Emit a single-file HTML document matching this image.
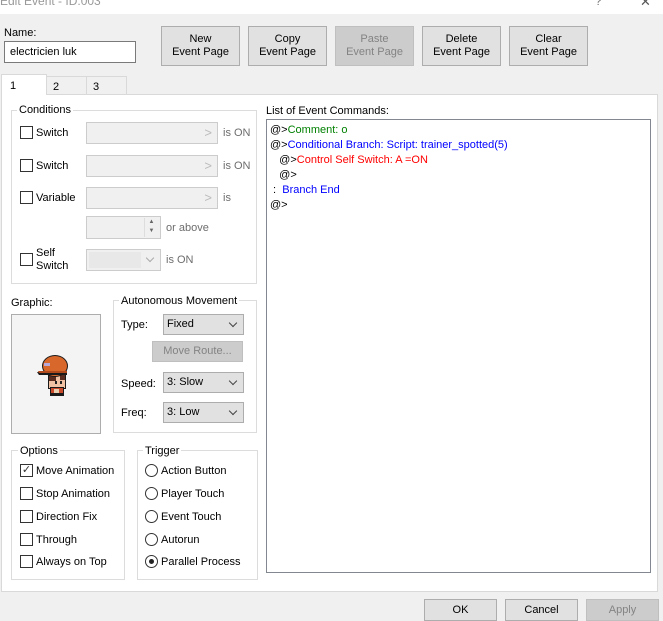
<!DOCTYPE html>
<html><head><style>
*{box-sizing:border-box;margin:0;padding:0}
body{width:663px;height:621px;background:#f0f0f0;font-family:"Liberation Sans",sans-serif;font-size:11px;color:#000;position:relative;overflow:hidden}
.a{position:absolute}
.btn{position:absolute;background:#e1e1e1;border:1px solid #adadad;text-align:center;line-height:13px;display:flex;align-items:center;justify-content:center}
.dis{background:#cccccc;border-color:#bfbfbf;color:#838383}
.grp{position:absolute;border:1px solid #dcdcdc}
.gl{position:absolute;background:#fff;padding:0 2px}
.cb{position:absolute;width:13px;height:13px;border:1px solid #333;background:#fff}
.rb{position:absolute;width:13px;height:13px;border:1px solid #333;border-radius:50%;background:#fff}
.fld{position:absolute;background:#f0f0f0;border:1px solid #cccccc}
.gr{color:#6d6d6d}
.cmb{position:absolute;background:#e1e1e1;border:1px solid #adadad;padding-left:3px;line-height:19px}
.chev{position:absolute;right:7px;top:5px;width:6px;height:6px;border-right:1px solid #444;border-bottom:1px solid #444;transform:rotate(45deg)}
.list div{height:15px;line-height:15px;white-space:pre}
.t{position:absolute;margin-top:1px}
</style></head><body>
<div class="a" style="left:0;top:0;width:663px;height:14px;background:#fff"></div>
<div class="a gr" style="left:0;top:-6px;font-size:12px;color:#999">Edit Event - ID:003</div>
<div class="a" style="left:595px;top:-6px;font-size:12px;color:#777">?</div>
<div class="a" style="left:640px;top:-6px;font-size:13px;color:#555">✕</div>

<div class="a" style="left:4px;top:27px">Name:</div>
<div class="a" style="left:4px;top:41px;width:132px;height:22px;border:1px solid #7a7a7a;background:#fff;padding:4px 0 0 5px">electricien luk</div>
<div class="btn" style="left:161px;top:26px;width:79px;height:40px">New<br>Event Page</div>
<div class="btn" style="left:248px;top:26px;width:79px;height:40px">Copy<br>Event Page</div>
<div class="btn dis" style="left:335px;top:26px;width:79px;height:40px">Paste<br>Event Page</div>
<div class="btn" style="left:422px;top:26px;width:79px;height:40px">Delete<br>Event Page</div>
<div class="btn" style="left:509px;top:26px;width:79px;height:40px">Clear<br>Event Page</div>

<div class="a" style="left:1px;top:94px;width:657px;height:498px;background:#fff;border:1px solid #d9d9d9"></div>
<div class="a" style="left:46px;top:76px;width:41px;height:19px;background:#f0f0f0;border:1px solid #d9d9d9;padding:4px 0 0 6px">2</div>
<div class="a" style="left:86px;top:76px;width:41px;height:19px;background:#f0f0f0;border:1px solid #d9d9d9;padding:4px 0 0 6px">3</div>
<div class="a" style="left:1px;top:74px;width:46px;height:21px;background:#fff;border:1px solid #d9d9d9;border-bottom:none;padding:5px 0 0 8px">1</div>

<div class="grp" style="left:11px;top:110px;width:246px;height:174px"></div>
<div class="gl" style="left:17px;top:104px">Conditions</div>
<div class="cb" style="left:20px;top:126px"></div><div class="t" style="left:36px;top:126px">Switch</div>
<div class="fld" style="left:86px;top:122px;width:132px;height:22px"><span class="a" style="right:5px;top:2px;color:#bbb;font-size:13px">&gt;</span></div><div class="t gr" style="left:223px;top:126px">is ON</div>
<div class="cb" style="left:20px;top:159px"></div><div class="t" style="left:36px;top:159px">Switch</div>
<div class="fld" style="left:86px;top:155px;width:132px;height:22px"><span class="a" style="right:5px;top:2px;color:#bbb;font-size:13px">&gt;</span></div><div class="t gr" style="left:223px;top:159px">is ON</div>
<div class="cb" style="left:20px;top:191px"></div><div class="t" style="left:36px;top:191px">Variable</div>
<div class="fld" style="left:86px;top:187px;width:132px;height:22px"><span class="a" style="right:5px;top:2px;color:#bbb;font-size:13px">&gt;</span></div><div class="t gr" style="left:223px;top:191px">is</div>
<div class="fld" style="left:86px;top:216px;width:75px;height:23px"></div>
<div class="a" style="left:144px;top:218px;width:14px;height:19px;border-left:1px solid #ddd;color:#666;font-size:6px;text-align:center;line-height:9px">▲<br>▼</div>
<div class="t gr" style="left:166px;top:221px">or above</div>
<div class="cb" style="left:20px;top:253px"></div><div class="t" style="left:36px;top:246px;line-height:13px">Self<br>Switch</div>
<div class="fld" style="left:86px;top:249px;width:75px;height:22px"><div class="a" style="left:2px;top:2px;width:52px;height:16px;background:#e8e8e8"></div><div class="chev" style="border-color:#aaa"></div></div>
<div class="t gr" style="left:166px;top:253px">is ON</div>

<div class="a" style="left:11px;top:297px">Graphic:</div>
<div class="a" style="left:11px;top:314px;width:90px;height:120px;background:#f4f4f4;border:1px solid #adadad"></div>
<svg class="a" style="left:30px;top:350px" width="45" height="55" viewBox="0 0 45 55">
<rect x="18" y="24" width="18" height="15" fill="#1a1a1a"/>
<rect x="19" y="25" width="16" height="13" fill="#f2c2a4"/>
<rect x="19" y="25" width="7" height="6" fill="#5a2c20"/>
<rect x="30" y="25" width="5" height="5" fill="#5a2c20"/>
<rect x="25" y="31" width="2" height="3" fill="#222"/><rect x="30" y="31" width="2" height="3" fill="#222"/>
<rect x="20" y="37" width="14" height="9" fill="#1a1a1a"/>
<rect x="21" y="38" width="12" height="5" fill="#c84a2a"/>
<rect x="24" y="39" width="5" height="4" fill="#e8d0b0"/>
<ellipse cx="25" cy="16" rx="13" ry="11" fill="#1a1a1a"/>
<ellipse cx="25" cy="16" rx="12" ry="10" fill="#d8672c"/>
<path d="M7 22h30v3H9z" fill="#1a1a1a"/>
<path d="M8 21h29v2H9z" fill="#b04a1c"/>
<rect x="14" y="13" width="6" height="3" fill="#b8a8d8"/>
</svg>

<div class="grp" style="left:113px;top:300px;width:144px;height:133px"></div>
<div class="gl" style="left:119px;top:295px">Autonomous Movement</div>
<div class="t" style="left:121px;top:318px">Type:</div>
<div class="cmb" style="left:163px;top:314px;width:81px;height:21px">Fixed<div class="chev"></div></div>
<div class="btn dis" style="left:152px;top:341px;width:91px;height:21px">Move Route...</div>
<div class="t" style="left:121px;top:377px">Speed:</div>
<div class="cmb" style="left:163px;top:372px;width:81px;height:21px">3: Slow<div class="chev"></div></div>
<div class="t" style="left:121px;top:406px">Freq:</div>
<div class="cmb" style="left:163px;top:402px;width:81px;height:21px">3: Low<div class="chev"></div></div>

<div class="grp" style="left:11px;top:450px;width:114px;height:130px"></div>
<div class="gl" style="left:18px;top:445px">Options</div>
<div class="cb" style="left:20px;top:464px;font-size:11px;line-height:10px;text-align:center;color:#333">✓</div><div class="t" style="left:36px;top:464px">Move Animation</div>
<div class="cb" style="left:20px;top:487px"></div><div class="t" style="left:36px;top:487px">Stop Animation</div>
<div class="cb" style="left:20px;top:510px"></div><div class="t" style="left:36px;top:510px">Direction Fix</div>
<div class="cb" style="left:20px;top:533px"></div><div class="t" style="left:36px;top:533px">Through</div>
<div class="cb" style="left:20px;top:555px"></div><div class="t" style="left:36px;top:555px">Always on Top</div>

<div class="grp" style="left:137px;top:450px;width:121px;height:130px"></div>
<div class="gl" style="left:143px;top:445px">Trigger</div>
<div class="rb" style="left:145px;top:464px"></div><div class="t" style="left:161px;top:464px">Action Button</div>
<div class="rb" style="left:145px;top:487px"></div><div class="t" style="left:161px;top:487px">Player Touch</div>
<div class="rb" style="left:145px;top:510px"></div><div class="t" style="left:161px;top:510px">Event Touch</div>
<div class="rb" style="left:145px;top:533px"></div><div class="t" style="left:161px;top:533px">Autorun</div>
<div class="rb" style="left:145px;top:555px"><div class="a" style="left:3px;top:3px;width:5px;height:5px;border-radius:50%;background:#222"></div></div><div class="t" style="left:161px;top:555px">Parallel Process</div>

<div class="a" style="left:266px;top:105px">List of Event Commands:</div>
<div class="a list" style="left:266px;top:119px;width:385px;height:454px;border:1px solid #828790;background:#fff;padding:3px 0 0 3px">
<div>@&gt;<span style="color:#008000">Comment: o</span></div>
<div>@&gt;<span style="color:#0000ff">Conditional Branch: Script: trainer_spotted(5)</span></div>
<div>   @&gt;<span style="color:#ff0000">Control Self Switch: A =ON</span></div>
<div>   @&gt;</div>
<div> :  <span style="color:#0000ff">Branch End</span></div>
<div>@&gt;</div>
</div>

<div class="btn" style="left:424px;top:599px;width:73px;height:22px">OK</div>
<div class="btn" style="left:505px;top:599px;width:73px;height:22px">Cancel</div>
<div class="btn dis" style="left:586px;top:599px;width:73px;height:22px">Apply</div>
</body></html>
